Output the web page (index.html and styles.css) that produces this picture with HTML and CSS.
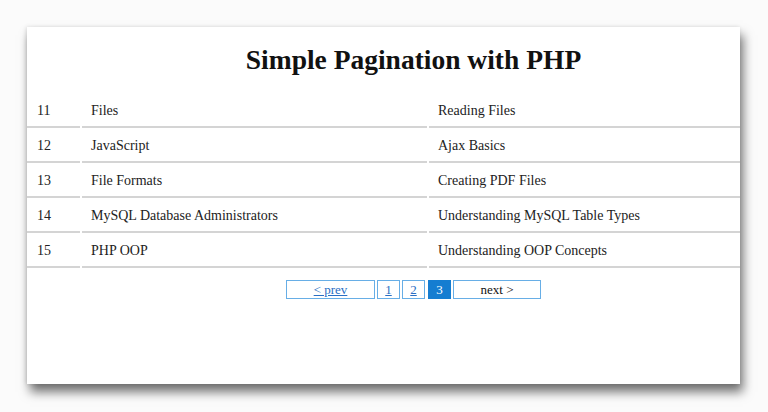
FILE: index.html
```html
<!DOCTYPE html>
<html>
<head>
<meta charset="utf-8">
<link rel="stylesheet" href="styles.css">
</head>
<body>
<div class="card">
  <h1 class="title">Simple Pagination with PHP</h1>
  <table class="list">
    <colgroup><col class="c1"><col class="c2"><col class="c3"></colgroup>
    <tr><td>11</td><td>Files</td><td>Reading Files</td></tr>
    <tr><td>12</td><td>JavaScript</td><td>Ajax Basics</td></tr>
    <tr><td>13</td><td>File Formats</td><td>Creating PDF Files</td></tr>
    <tr><td>14</td><td>MySQL Database Administrators</td><td>Understanding MySQL Table Types</td></tr>
    <tr><td>15</td><td>PHP OOP</td><td>Understanding OOP Concepts</td></tr>
  </table>
  <div class="pager">
    <a class="pg wide" href="#">&lt; prev</a>
    <a class="pg" href="#">1</a>
    <a class="pg" href="#">2</a>
    <span class="pg active">3</span>
    <span class="pg wide next plain">next &gt;</span>
  </div>
</div>
</body>
</html>
```
FILE: styles.css
```css
html, body {
  margin: 0;
  padding: 0;
  background: #fbfbfb;
}
body {
  box-sizing: border-box;
  height: 412px;
  padding: 27px 0 28px 27px;
  font-family: "Liberation Serif", "Times New Roman", serif;
}
.card {
  box-sizing: border-box;
  width: 713px;
  height: 357px;
  background: #fff;
  box-shadow: 3px 8px 10px rgba(0,0,0,0.55), -1px 0 4px rgba(0,0,0,0.12);
}
.title {
  margin: 0;
  padding: 17px 0 0 60px;
  height: 49px;
  font-size: 27.5px;
  font-weight: bold;
  text-align: center;
  color: #111;
  line-height: 32px;
}
.list {
  border-collapse: separate;
  border-spacing: 2px 0;
  margin: 0 -2px;
  width: 717px;
  font-size: 14px;
  color: #222;
}
.c1 { width: 53px; }
.c2 { width: 345px; }
.list td {
  height: 35px;
  padding: 3px 0 0 9px;
  box-sizing: border-box;
  border-bottom: 2px solid #d4d4d4;
  vertical-align: middle;
}
.list td:first-child { padding-left: 10px; }
.pager {
  display: flex;
  justify-content: center;
  gap: 2px;
  padding: 12px 0 0 60px;
}
.pg {
  box-sizing: border-box;
  height: 19px;
  min-width: 23px;
  border: 1px solid #67aee6;
  font-size: 13px;
  line-height: 17px;
  text-align: center;
  color: #2a6fc4;
  text-decoration: underline;
}
.wide { width: 89px; }
.next { width: 88px; }
.active {
  background: #157dd1;
  border-color: #157dd1;
  color: #fff;
  text-decoration: none;
  margin-left: 1px;
}
.plain {
  color: #111;
  text-decoration: none;
}
```
